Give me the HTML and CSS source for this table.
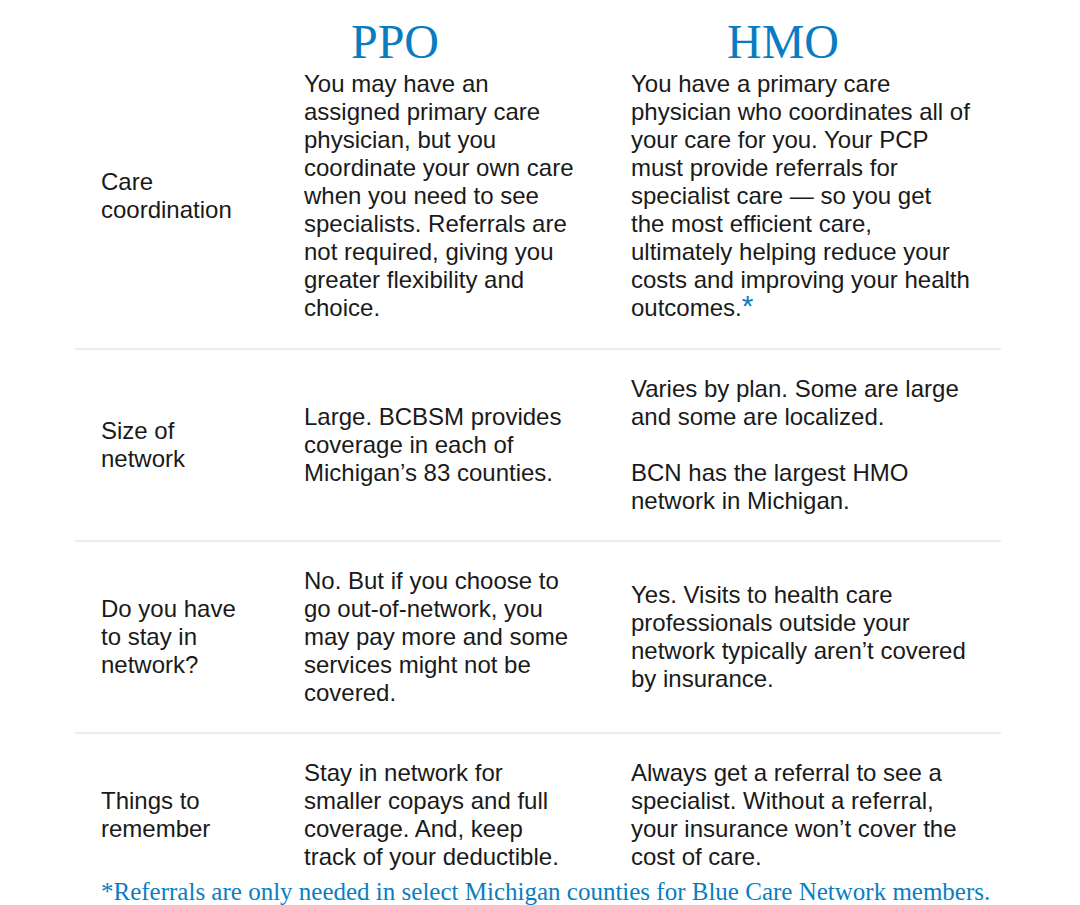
FILE: index.html
```html
<!DOCTYPE html>
<html lang="en">
<head>
<meta charset="utf-8">
<title>PPO vs HMO</title>
<link rel="stylesheet" href="styles.css">
</head>
<body>
<div class="sheet">
  <div class="row head">
    <div class="cell"></div>
    <div class="cell"><h2 class="plan plan-ppo">PPO</h2></div>
    <div class="cell"><h2 class="plan plan-hmo">HMO</h2></div>
  </div>

  <div class="row first">
    <div class="cell label">Care<br>coordination</div>
    <div class="cell ppo">You may have an assigned primary care physician, but you coordinate your own care when you need to see specialists. Referrals are not required, giving you greater flexibility and choice.</div>
    <div class="cell hmo">You have a primary care physician who coordinates all of your care for you. Your PCP must provide referrals for specialist care — so you get<br>the most efficient care, ultimately helping reduce your costs and improving your health outcomes.<span class="star">*</span></div>
  </div>

  <div class="row">
    <div class="cell label">Size of<br>network</div>
    <div class="cell ppo">Large. BCBSM provides coverage in each of Michigan’s 83 counties.</div>
    <div class="cell hmo">Varies by plan. Some are large and some are localized.<br><br>BCN has the largest HMO network in Michigan.</div>
  </div>

  <div class="row">
    <div class="cell label">Do you have<br>to stay in<br>network?</div>
    <div class="cell ppo">No. But if you choose to go out-of-network, you may pay more and some services might not be covered.</div>
    <div class="cell hmo">Yes. Visits to health care professionals outside your network typically aren’t covered by insurance.</div>
  </div>

  <div class="row last">
    <div class="cell label">Things to<br>remember</div>
    <div class="cell ppo">Stay in network for smaller copays and full coverage. And, keep track of your deductible.</div>
    <div class="cell hmo">Always get a referral to see a specialist. Without a referral, your insurance won’t cover the cost of care.</div>
  </div>

  <p class="note">*Referrals are only needed in select Michigan counties for Blue Care Network members.</p>
</div>
</body>
</html>
```

FILE: styles.css
```css
* { box-sizing: border-box; }

html, body {
  margin: 0;
  padding: 0;
  background: #ffffff;
}

body {
  font-family: "Liberation Sans", Arial, sans-serif;
  color: #1a1a1a;
  width: 1080px;
  height: 905px;
  overflow: hidden;
}

.sheet {
  width: 926px;
  margin-left: 75px;
}

.row {
  display: grid;
  grid-template-columns: 229px 327px 370px;
  align-items: center;
  padding: 25px 0 25px 0;
  border-bottom: 2px solid #ebebeb;
  font-size: 24px;
  line-height: 28px;
}

.row.head {
  padding: 18px 0 4px 0;
  border-bottom: none;
  align-items: end;
}

.row.first {
  padding-top: 0;
  padding-bottom: 26px;
}

.row.last {
  border-bottom: none;
  padding-bottom: 0;
}

.cell.label {
  padding-left: 26px;
}

.cell.ppo {
  width: 276px;
}

.cell.hmo {
  width: 346px;
}

.plan {
  margin: 0;
  font-family: "Liberation Serif", "Times New Roman", serif;
  font-weight: normal;
  font-size: 48px;
  line-height: 48px;
  color: #0a7dc2;
  text-align: center;
}

.plan-ppo { width: 182px; }
.plan-hmo { width: 304px; }

.star {
  color: #0a7dc2;
  font-size: 30px;
  line-height: 20px;
}

.note {
  margin: 8px 0 0 26px;
  font-family: "Liberation Serif", "Times New Roman", serif;
  font-size: 25px;
  line-height: 26px;
  color: #0a7dc2;
  white-space: nowrap;
}
```
